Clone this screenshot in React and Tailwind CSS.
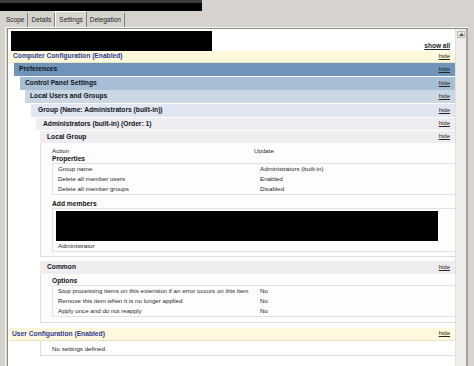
import React from "react";

const FONT = { fontFamily: '"Liberation Sans", Arial, sans-serif' };

function Hide() {
  return <span className="underline text-[6px] text-[#222] leading-[6px] mb-[2px]">hide</span>;
}

function Bar({ label, cls }) {
  return (
    <div className={`flex items-center justify-between pr-[5px] ${cls}`}>
      <span className="font-bold text-[6.7px] leading-none whitespace-nowrap">{label}</span>
      <Hide />
    </div>
  );
}

function Row({ left, right, cls }) {
  return (
    <div className={`flex items-center text-[6.2px] text-[#1e1e1e] leading-none ${cls}`}>
      <span className="w-[202px] shrink-0 whitespace-nowrap">{left}</span>
      <span className="whitespace-nowrap">{right}</span>
    </div>
  );
}

function Heading({ children, cls }) {
  return (
    <div className={`flex items-center font-bold text-[6.7px] text-[#111] leading-none ${cls}`}>
      {children}
    </div>
  );
}

function Tab({ label, active }) {
  return active ? (
    <div className="h-[16px] px-[3px] flex items-center border-t border-l border-white border-r border-r-[#808080] bg-[#d9d6d1] text-[6.5px] text-[#222]">
      {label}
    </div>
  ) : (
    <div className="h-[14px] px-[3px] flex items-center border-r border-[#808080] text-[6.5px] text-[#222]">
      {label}
    </div>
  );
}

export default function App() {
  return (
    <div className="w-[474px] h-[366px] bg-[#d6d3ce] overflow-hidden flex flex-col" style={FONT}>
      {/* title strip */}
      <div className="h-[11px] flex shrink-0">
        <div className="w-[202px] bg-black border-t-[3px] border-[#3b3b3b]" />
      </div>

      {/* tabs */}
      <div className="h-[16px] flex items-end pl-[3px] shrink-0">
        <Tab label="Scope" />
        <Tab label="Details" />
        <Tab label="Settings" active />
        <Tab label="Delegation" />
      </div>

      {/* panel */}
      <div className="flex-1 ml-[5px] mr-[6px] flex border-l border-t border-[#f7f6f3] min-h-0">
        <div className="flex-1 ml-[1px] flex border-t border-l border-[#8d8b86] border-r-2 border-r-[#a7a49e] min-h-0">
          {/* report */}
          <div className="w-[447px] bg-white">
            <div className="h-[22px] flex items-end justify-between">
              <div className="ml-[3px] w-[201px] h-[20px] bg-black" />
              <span className="mr-[5px] mb-[2px] underline font-bold text-[6.5px] text-[#222] leading-none">show all</span>
            </div>

            <div className="ml-[1px]">
              <Bar
                label="Computer Configuration (Enabled)"
                cls="h-[12px] pl-[4px] bg-[#fef8dc] border-b border-[#ece4c2] text-[#2f3a94]"
              />
              <div className="ml-[5px]">
                <Bar label="Preferences" cls="h-[13px] pl-[5px] bg-[#6f93b9] text-[#0f1420]" />
                <div className="ml-[6px] mt-[1px]">
                  <Bar label="Control Panel Settings" cls="h-[13px] pl-[5px] bg-[#a8bed4] text-[#0f1420]" />
                  <div className="ml-[5px]">
                    <Bar label="Local Users and Groups" cls="h-[13px] pl-[5px] bg-[#cbd7e2] text-[#0f1420]" />
                    <div className="ml-[6px] mt-[1px]">
                      <Bar label="Group (Name: Administrators (built-in))" cls="h-[13px] pl-[7px] bg-[#e2e6f2] text-[#0f1420]" />
                      <div className="ml-[5px] mt-[1px]">
                        <Bar label="Administrators (built-in) (Order: 1)" cls="h-[12px] pl-[7px] bg-[#eeecf0] text-[#0f1420]" />
                        <div className="ml-[4px] mt-[1px]">
                          <Bar label="Local Group" cls="h-[12px] pl-[7px] bg-[#efedef] text-[#0f1420]" />
                          {/* Local Group details */}
                          <div className="border-l border-b border-[#dedcde] bg-[#fefdfe] pl-[11px] pt-[4px] pb-[4px]">
                            <Row left="Action" right="Update" cls="h-[8px]" />
                            <Heading cls="h-[8px]">Properties</Heading>
                            <div className="border-t border-l border-b border-[#e2e0e2] pl-[5px]">
                              <Row left="Group name" right="Administrators (built-in)" cls="h-[10px]" />
                              <Row left="Delete all member users" right="Enabled" cls="h-[10px]" />
                              <Row left="Delete all member groups" right="Disabled" cls="h-[10px]" />
                            </div>
                            <Heading cls="h-[8px] mt-[5px]">Add members</Heading>
                            <div className="border-t border-l border-b border-[#e2e0e2] pt-[2px]">
                              <div className="ml-[3px] w-[382px] h-[30px] bg-black" />
                              <Row left="Administrator" right="" cls="h-[10px] pl-[5px]" />
                            </div>
                          </div>

                          <Bar label="Common" cls="h-[13px] mt-[4px] pl-[7px] bg-[#efedef] text-[#0f1420]" />
                          <div className="border-l border-b border-[#dedcde] bg-[#fefdfe] pl-[11px] pt-[3px] pb-[5px]">
                            <Heading cls="h-[8px]">Options</Heading>
                            <div className="border-t border-l border-b border-[#e2e0e2] pl-[5px]">
                              <Row left="Stop processing items on this extension if an error occurs on this item" right="No" cls="h-[10px]" />
                              <Row left="Remove this item when it is no longer applied" right="No" cls="h-[10px]" />
                              <Row left="Apply once and do not reapply" right="No" cls="h-[10px]" />
                            </div>
                          </div>
                        </div>
                      </div>
                    </div>
                  </div>
                </div>
              </div>

              <Bar
                label="User Configuration (Enabled)"
                cls="h-[13px] mt-[5px] pl-[3px] bg-[#fef8dc] border-b border-[#ece4c2] text-[#2f3a94]"
              />
              <div className="ml-[31px] border-l border-b border-[#dedcde] pl-[11px] pt-[3px] pb-[1px]">
                <Row left="No settings defined." right="" cls="h-[10px]" />
              </div>
            </div>
          </div>

          {/* scrollbar */}
          <div className="w-[11px] bg-[#eeede9] border-l border-[#e2e0db] pt-[2px] flex flex-col items-center">
            <div className="w-[8px] h-[7px] bg-[#e4e2de] border border-[#bdbab4] flex items-center justify-center">
              <svg width="5" height="3" viewBox="0 0 5 3">
                <path d="M0 3 L2.5 0 L5 3 Z" fill="#555" />
              </svg>
            </div>
          </div>
        </div>
      </div>
    </div>
  );
}
